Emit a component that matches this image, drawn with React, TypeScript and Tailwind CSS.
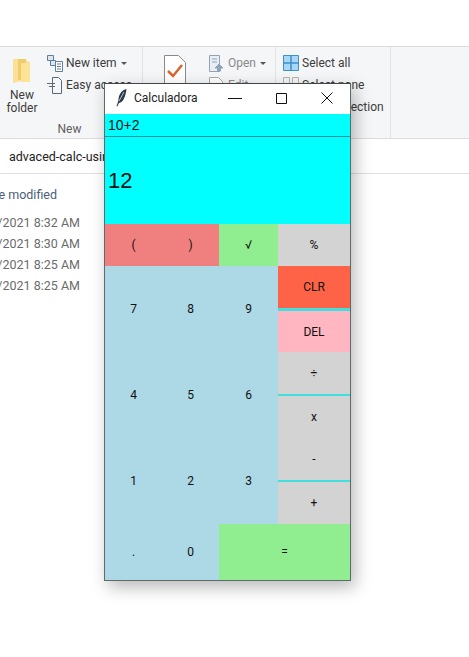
const dates = ["10/7/2021 8:32 AM", "10/7/2021 8:30 AM", "10/7/2021 8:25 AM", "10/7/2021 8:25 AM"];

function RibbonRow({ icon, label, caret, muted }: { icon: React.ReactNode; label: string; caret?: boolean; muted?: boolean }) {
  return (
    <div className="flex h-[22px] items-center whitespace-nowrap">
      <div className="flex w-[19px] shrink-0 justify-start">{icon}</div>
      <span className={muted ? "text-[#8a8a8a]" : "text-[#3c3c3c]"}>{label}</span>
      {caret && <span className="ml-1 h-0 w-0 border-x-[3px] border-t-[3px] border-x-transparent border-t-[#555]" />}
    </div>
  );
}

function Ribbon() {
  return (
    <div className="flex h-[93px] border-y border-[#dcdcdc] bg-[#f5f6f7] text-[12px]">
      {/* New group */}
      <div className="flex w-[143px] flex-col border-r border-[#e2e3e4]">
        <div className="flex flex-1">
          <div className="flex w-[47px] flex-col items-center pt-[10px] leading-[13px] text-[#3c3c3c]">
            <svg width="20" height="28" viewBox="0 0 20 28" className="ml-[-3px]">
              <path d="M1 2h8l9 3v20l-9-1-8 2z" fill="#fbe09a" />
              <path d="M6 2h8v21H6z" fill="#f2cb6c" />
              <path d="M9 6h9v19H9z" fill="#fde396" />
            </svg>
            <span className="ml-[-3px] mt-[4px]">New</span>
            <span className="ml-[-3px]">folder</span>
          </div>
          <div className="flex flex-col pt-[5px]">
            <RibbonRow
              label="New item"
              caret
              icon={
                <svg width="16" height="17" viewBox="0 0 16 17" fill="none" stroke="#5f7f98">
                  <path d="M.5.5h6v5h-6zM3.5 5.5h5v5h-5z" fill="#dbe6ef" />
                  <path d="M8.5 6.5h7v10h-7zM10 9h4M10 11.5h4M10 14h4" fill="#fff" />
                </svg>
              }
            />
            <RibbonRow
              label="Easy access"
              caret
              icon={
                <svg width="15" height="17" viewBox="0 0 15 17" fill="none" stroke="#5a6a78">
                  <path d="M5.5.5h6l3 3v13h-9zM0 6.5h8M2 9.5h6" />
                </svg>
              }
            />
          </div>
        </div>
        <div className="h-[20px] pt-[2px] pr-[3px] text-center leading-[18px] text-[#5f5f5f]">New</div>
      </div>
      {/* Open group */}
      <div className="flex w-[133px] border-r border-[#e2e3e4]">
        <div className="flex w-[66px] justify-end pt-[8px] pr-[23px]">
          <svg width="22" height="30" viewBox="0 0 22 30" fill="#fff" stroke="#8a8a8a" className="shrink-0">
            <path d="M.5.5h14l7 7v22H.5z" />
            <path d="M4 16l5 5 9-11" fill="none" stroke="#d9652b" strokeWidth="2.5" />
          </svg>
        </div>
        <div className="flex flex-col pt-[5px]">
          <RibbonRow
            label="Open"
            caret
            muted
            icon={
              <svg width="15" height="17" viewBox="0 0 15 17" fill="#e8eef4" stroke="#8fa4b8">
                <path d="M.5.5h10v16H.5zM3 4h5M3 7h5" />
                <path d="M10 9l4 4h-2.5v3h-3v-3H6z" fill="#8fa4b8" />
              </svg>
            }
          />
          <RibbonRow
            label="Edit"
            muted
            icon={
              <svg width="15" height="17" viewBox="0 0 15 17" fill="#fff" stroke="#a8a8a8">
                <path d="M.5.5h9l4 4v12H.5z" />
              </svg>
            }
          />
        </div>
      </div>
      {/* Select group */}
      <div className="flex w-[115px] flex-col border-r border-[#e2e3e4] pl-[7px] pt-[5px]">
        <RibbonRow
          label="Select all"
          icon={
            <svg width="16" height="16" viewBox="0 0 16 16" fill="#a8d8f5" stroke="#3f8fc9">
              <path d="M.5.5h15v15H.5z" />
              <path d="M8 .5v15M.5 8h15" strokeWidth="1.5" />
            </svg>
          }
        />
        <RibbonRow
          label="Select none"
          icon={
            <svg width="16" height="16" viewBox="0 0 16 16" fill="none" stroke="#b5b5b5">
              <path d="M.5.5h6v6h-6zM9.5.5h6v6h-6zM.5 9.5h6v6h-6zM9.5 9.5h6v6h-6z" />
            </svg>
          }
        />
        <RibbonRow label="Invert selection" icon={<span />} />
      </div>
      <div className="flex-1" />
    </div>
  );
}

function Calc() {
  const digit = "flex items-center justify-center";
  return (
    <div className="absolute left-[104px] top-[83px] flex h-[498px] w-[247px] flex-col border border-[#5f6b6b] border-t-[#444] bg-white font-['Roboto',sans-serif] text-[12px] text-[#111] shadow-[4px_6px_16px_rgba(0,0,0,0.28)]">
      <div className="flex h-[30px] shrink-0 items-center pb-[2px] text-[12px]">
        <svg width="11" height="18" viewBox="0 0 11 18" className="ml-[11px]">
          <path d="M10.5 0C6 1 3 5 2.5 10L2 13 .5 17l.8.4L3 14c4-.5 6.500-6 7.500-14z" fill="#2a3a48" />
          <path d="M8 3 3 12" stroke="#e4ebf0" strokeWidth=".8" />
        </svg>
        <span className="ml-[7px] flex-1 text-[#222]">Calculadora</span>
        <div className="flex w-[46px] justify-center">
          <svg width="14" height="14" viewBox="0 0 14 14" stroke="#111"><path d="M0 7.500h14" /></svg>
        </div>
        <div className="flex w-[46px] justify-center">
          <svg width="11" height="11" viewBox="0 0 11 11" fill="none" stroke="#111"><path d="M.5.5h10v10H.5z" /></svg>
        </div>
        <div className="flex w-[46px] justify-center">
          <svg width="12" height="12" viewBox="0 0 12 12" stroke="#111"><path d="M.5.5l11 11M11.500.5l-11 11" /></svg>
        </div>
      </div>
      <div className="flex h-[23px] shrink-0 items-center border-b border-[#2c8f98] bg-[#00ffff] pl-[3px] font-['Liberation_Sans',sans-serif] text-[14px]">10+2</div>
      <div className="flex h-[87px] shrink-0 items-center bg-[#00ffff] pl-[3px] font-['Liberation_Sans',sans-serif] text-[22px]">12</div>
      <div className="grid flex-1 grid-cols-[57px_57px_59px_1fr] grid-rows-[42px_86px_86px_86px_1fr] bg-[#add8e6]">
        <div className="col-span-2 grid grid-cols-2 bg-[#f08080]">
          <div className={digit}>(</div>
          <div className={digit}>)</div>
        </div>
        <div className={`${digit} bg-[#90ee90]`}>√</div>
        <div className={`${digit} bg-[#d3d3d3]`}>%</div>

        <div className={digit}>7</div>
        <div className={digit}>8</div>
        <div className={digit}>9</div>
        <div className="row-span-3 flex flex-col bg-[#d3d3d3]">
          <div className={`${digit} h-[42px] bg-[#ff6347]`}>CLR</div>
          <div className="h-[3px] bg-[#40e0e0]" />
          <div className={`${digit} h-[41px] bg-[#ffb6c1]`}>DEL</div>
          <div className={`${digit} h-[42px]`}>÷</div>
          <div className="h-[2px] bg-[#40e0e0]" />
          <div className={`${digit} h-[41px]`}>x</div>
          <div className={`${digit} h-[43px]`}>-</div>
          <div className="h-[2px] bg-[#40e0e0]" />
          <div className={`${digit} flex-1`}>+</div>
        </div>

        <div className={digit}>4</div>
        <div className={digit}>5</div>
        <div className={digit}>6</div>

        <div className={digit}>1</div>
        <div className={digit}>2</div>
        <div className={digit}>3</div>

        <div className={digit}>.</div>
        <div className={digit}>0</div>
        <div className={`${digit} col-span-2 bg-[#90ee90]`}>=</div>
      </div>
    </div>
  );
}

export default function App() {
  return (
    <div className="relative h-[657px] w-[469px] overflow-hidden bg-white font-['Roboto',sans-serif]">
      <div className="h-[46px]" />
      <Ribbon />
      <div className="flex h-[35px] items-center border-b border-[#e0e0e0] pl-[9px] pt-[3px] text-[12.5px] text-[#222]">advaced-calc-using-python</div>
      <div className="flex h-[38px] w-[57px] items-center justify-end overflow-hidden whitespace-nowrap pt-[4px] text-[12.5px] text-[#4c607a]">Date modified</div>
      <div className="flex w-[80px] flex-col items-end overflow-hidden whitespace-nowrap text-[12.5px] leading-[21px] text-[#6b6b6b]">
        {dates.map((d, i) => (
          <div key={i}>{d}</div>
        ))}
      </div>
      <Calc />
    </div>
  );
}
